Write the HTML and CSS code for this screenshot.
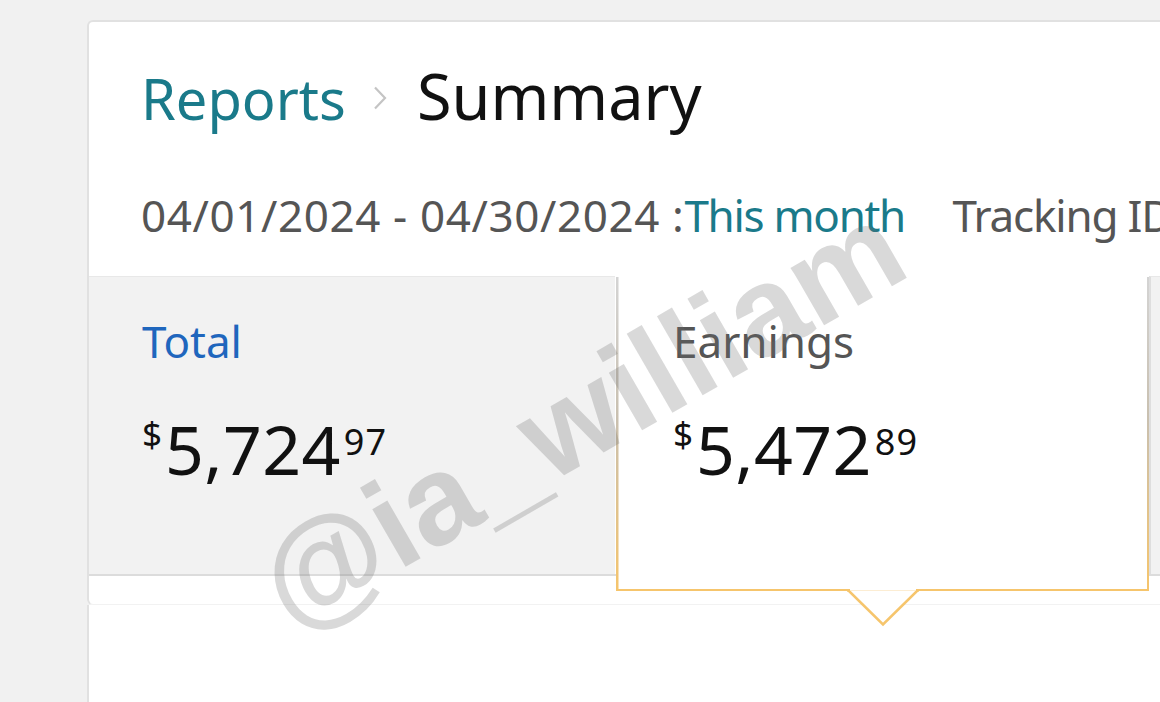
FILE: index.html
```html
<!DOCTYPE html>
<html lang="en">
<head>
    <meta charset="UTF-8">
    <meta name="viewport" content="width=device-width, initial-scale=1.0">
    <title>Reports - Summary</title>
    <link rel="stylesheet" href="styles.css">
</head>
<body>
    <!-- Carte principale : fil d'Ariane + période + tuiles -->
    <div class="card">
        <div class="card-head">
            <h1 class="crumbs">
                <span class="crumb-link">Reports</span>
                <svg class="crumb-sep" width="14" height="24" viewBox="0 0 14 24">
                    <path d="M2 1.5 L12 12 L2 22.5" fill="none" stroke="#c4c4c4" stroke-width="2.2"/>
                </svg>
                <span class="crumb-current">Summary</span>
            </h1>
            <div class="range">
                <span class="range-dates">04/01/2024 - 04/30/2024 :</span><span class="range-name">This month</span>
                <span class="tracking">Tracking ID</span>
            </div>
        </div>

        <div class="tiles">
            <div class="tile">
                <div class="tile-label tile-label-link">Total</div>
                <div class="amount">
                    <span class="cur">$</span><span class="whole">5,724</span><span class="cents">97</span>
                </div>
            </div>
            <div class="tile tile-active">
                <div class="tile-label">Earnings</div>
                <div class="amount">
                    <span class="cur">$</span><span class="whole">5,472</span><span class="cents">89</span>
                </div>
                <svg class="pointer" width="72" height="38" viewBox="0 0 72 38">
                    <path d="M0 1.5 L1.5 1.5 L36 35.5 L70.5 1.5 L72 1.5" fill="#fff" stroke="#f6c56c" stroke-width="2.5"/>
                    <rect x="3" y="0" width="66" height="1.4" fill="#fff"/>
                </svg>
            </div>
            <div class="tile tile-next"></div>
        </div>
    </div>

    <!-- Carte suivante (contenu hors écran) -->
    <div class="card card-lower"></div>

    <div class="watermark">@ia_william</div>
</body>
</html>
```

FILE: styles.css
```css
/* CSS */
body {
    font-family: "Noto Sans", "Open Sans", sans-serif;
    background-color: #f1f1f1;
    margin: 0;
    padding: 0;
    width: 1160px;
    height: 702px;
    overflow: hidden;
    position: relative;
}

.card {
    margin: 20px 0 0 87px;
    width: 1073px;
    background-color: #fff;
    border: 2px solid #e1e1e1;
    border-right: none;
    border-bottom: 1px solid #f2f2f2;
    border-radius: 6px 0 0 6px;
    height: 585px;
    box-sizing: border-box;
}

.card-lower {
    margin-top: 0;
    height: 97px;
    border-top: none;
    border-bottom: none;
    border-radius: 0;
}

.card-head {
    padding: 36px 0 0 52px;
    height: 254px;
    box-sizing: border-box;
    overflow: hidden;
}

.crumbs {
    margin: 0;
    display: flex;
    align-items: baseline;
    font-weight: 400;
    line-height: 1.2;
    white-space: nowrap;
}

.crumb-link {
    font-size: 56px;
    color: #1a7a8a;
}

.crumb-sep {
    margin: 0 30px 0 27px;
    align-self: center;
    position: relative;
    top: 2px;
}

.crumb-current {
    font-size: 63px;
    color: #111;
}

.range {
    margin-top: 55px;
    font-size: 44px;
    line-height: 1.2;
    color: #555;
    white-space: nowrap;
}

.range-dates {
    letter-spacing: 0.6px;
}

.range-name {
    color: #1a7a8a;
    letter-spacing: -1.3px;
}

.tracking {
    margin-left: 36px;
    letter-spacing: -1.2px;
}

.tiles {
    display: flex;
    height: 298px;
    border-bottom: 2px solid #dcdcdc;
}

.tile {
    flex: 0 0 526px;
    background-color: #f2f2f2;
    border-top: 1px solid #e8e8e8;
    padding: 38px 0 0 53px;
    box-sizing: border-box;
}

.tile-active {
    flex: 0 0 533px;
    position: relative;
    z-index: 2;
    height: 315px;
    margin-left: 1px;
    background-color: #fff;
    border: 2.5px solid #f6c56c;
    border-top: 1px solid #fff;
    border-left-color: transparent;
    border-right-color: transparent;
    background-image: linear-gradient(#d4d4d4, #c9c0b0 45%, #f6c56c), linear-gradient(#d4d4d4, #c9c0b0 45%, #f6c56c);
    background-size: 2.5px 100%, 2.5px 100%;
    background-position: 0 0, 100% 0;
    background-repeat: no-repeat;
    background-origin: border-box;
    padding-left: 55px;
}

.tile-next {
    flex: 1;
    border-left: 2px solid #dedede;
}

.tile-label {
    font-size: 44px;
    line-height: 1.2;
    color: #555;
}

.tile-label-link {
    color: #1f66bd;
}

.amount {
    display: flex;
    align-items: flex-start;
    margin-top: 47px;
    color: #111;
    line-height: 1;
}

.cur {
    font-size: 35px;
    margin: 1px 3px 0 0;
}

.whole {
    font-size: 68px;
    letter-spacing: 0.4px;
}

.cents {
    font-size: 36px;
    letter-spacing: 1px;
    margin: 9px 0 0 3px;
}

/* pointe sous la tuile active */
.pointer {
    position: absolute;
    left: 229px;
    bottom: -38px;
}

/* filigrane */
.watermark {
    position: absolute;
    left: 221px;
    top: 353px;
    width: 720px;
    text-align: center;
    font-family: "Liberation Sans", Arial, sans-serif;
    font-weight: 700;
    font-size: 126px;
    line-height: 1;
    color: rgba(110, 110, 110, 0.26);
    transform: rotate(-30deg);
    transform-origin: 50% 50%;
    white-space: nowrap;
    pointer-events: none;
    z-index: 5;
}
```
